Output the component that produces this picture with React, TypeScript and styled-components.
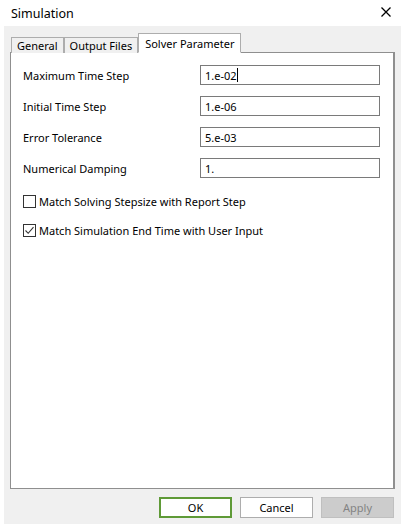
import styled, { createGlobalStyle } from "styled-components";

const GlobalStyle = createGlobalStyle`
  html, body {
    margin: 0;
    padding: 0;
    background: #ffffff;
  }
  body {
    font-family: "Noto Sans", "Open Sans", "Liberation Sans", sans-serif;
    font-size: 11px;
    color: #000000;
  }
`;

const Window = styled.div`
  width: 405px;
  height: 530px;
  background: #ffffff;
  display: flex;
  flex-direction: column;
`;

const TitleBar = styled.div`
  height: 26px;
  box-sizing: border-box;
  display: flex;
  align-items: center;
  justify-content: space-between;
  padding: 0 14px 0 11px;
`;

const Title = styled.span`
  font-size: 12.5px;
`;

const CloseIcon = styled.svg`
  width: 10px;
  height: 10px;
  margin-bottom: 2px;
`;

const Client = styled.div`
  margin: 0 4px;
  height: 498px;
  background: #f0f0f0;
  display: flex;
  flex-direction: column;
  padding: 7px 6px 0 6px;
  box-sizing: border-box;
`;

const TabStrip = styled.div`
  display: flex;
  align-items: flex-end;
  padding-left: 1px;
  height: 20px;
  position: relative;
  z-index: 1;
  margin-bottom: -1px;
`;

const Tab = styled.div<{ $active?: boolean }>`
  height: ${(p) => (p.$active ? "20px" : "16px")};
  box-sizing: border-box;
  padding: 0 ${(p) => (p.$active ? "6px" : "5px")};
  display: flex;
  align-items: center;
  background: ${(p) => (p.$active ? "#ffffff" : "#f0f0f0")};
  border: 1px solid #adadad;
  border-bottom: ${(p) => (p.$active ? "1px solid #ffffff" : "none")};
  & + & {
    border-left: ${(p) => (p.$active ? "1px solid #adadad" : "none")};
  }
`;

const Panel = styled.div`
  height: 437px;
  background: #ffffff;
  border: 1px solid #8f8f8f;
  border-right-width: 2px;
  box-sizing: border-box;
  padding: 12px 14px 0 12px;
  display: flex;
  flex-direction: column;
`;

const FieldRow = styled.div`
  display: grid;
  grid-template-columns: 177px 180px;
  align-items: center;
  height: 20px;
  margin-bottom: 11px;
`;

const Label = styled.label``;

const Field = styled.div`
  height: 20px;
  box-sizing: border-box;
  border: 1px solid #7a7a7a;
  padding: 0 4px;
  display: flex;
  align-items: center;
`;

const Caret = styled.span`
  display: inline-block;
  width: 1px;
  height: 14px;
  background: #000000;
`;

const Checks = styled.div`
  margin-top: 4px;
`;

const CheckRow = styled.div`
  display: flex;
  align-items: center;
  gap: 3px;
  height: 16px;
  margin-bottom: 13px;
`;

const Box = styled.span`
  width: 13px;
  height: 13px;
  box-sizing: border-box;
  border: 1px solid #333333;
  background: #ffffff;
  display: flex;
  align-items: center;
  justify-content: center;
`;

const Footer = styled.div`
  display: flex;
  justify-content: flex-end;
  gap: 8px;
  padding: 8px 1px 0 0;
`;

const Button = styled.button<{ $primary?: boolean; $disabled?: boolean }>`
  width: 73px;
  height: 21px;
  box-sizing: border-box;
  font-family: inherit;
  font-size: 11px;
  padding: 0;
  background: ${(p) => (p.$disabled ? "#cccccc" : "#ffffff")};
  color: ${(p) => (p.$disabled ? "#838383" : "#000000")};
  border: ${(p) =>
    p.$primary ? "2px solid #5f9a37" : p.$disabled ? "1px solid #bfbfbf" : "1px solid #adadad"};
`;

const fields = [
  { label: "Maximum Time Step", value: "1.e-02", focused: true },
  { label: "Initial Time Step", value: "1.e-06" },
  { label: "Error Tolerance", value: "5.e-03" },
  { label: "Numerical Damping", value: "1." },
];

const checks = [
  { label: "Match Solving Stepsize with Report Step", checked: false },
  { label: "Match Simulation End Time with User Input", checked: true },
];

export default function App() {
  return (
    <>
      <GlobalStyle />
      <Window>
        <TitleBar>
          <Title>Simulation</Title>
          <CloseIcon viewBox="0 0 10 10">
            <path d="M0.5 0.5 L9.5 9.5 M9.5 0.5 L0.5 9.5" stroke="#000" strokeWidth="1.3" />
          </CloseIcon>
        </TitleBar>
        <Client>
          <TabStrip>
            <Tab>General</Tab>
            <Tab>Output Files</Tab>
            <Tab $active>Solver Parameter</Tab>
          </TabStrip>
          <Panel>
            {fields.map((f) => (
              <FieldRow key={f.label}>
                <Label>{f.label}</Label>
                <Field>
                  {f.value}
                  {f.focused && <Caret />}
                </Field>
              </FieldRow>
            ))}
            <Checks>
              {checks.map((c) => (
                <CheckRow key={c.label}>
                  <Box>
                    {c.checked && (
                      <svg width="11" height="11" viewBox="0 0 11 11">
                        <path d="M1.5 5.5 L4.2 8.3 L9.5 2.2" fill="none" stroke="#333" strokeWidth="1.1" />
                      </svg>
                    )}
                  </Box>
                  {c.label}
                </CheckRow>
              ))}
            </Checks>
          </Panel>
          <Footer>
            <Button $primary>OK</Button>
            <Button>Cancel</Button>
            <Button $disabled>Apply</Button>
          </Footer>
        </Client>
      </Window>
    </>
  );
}
